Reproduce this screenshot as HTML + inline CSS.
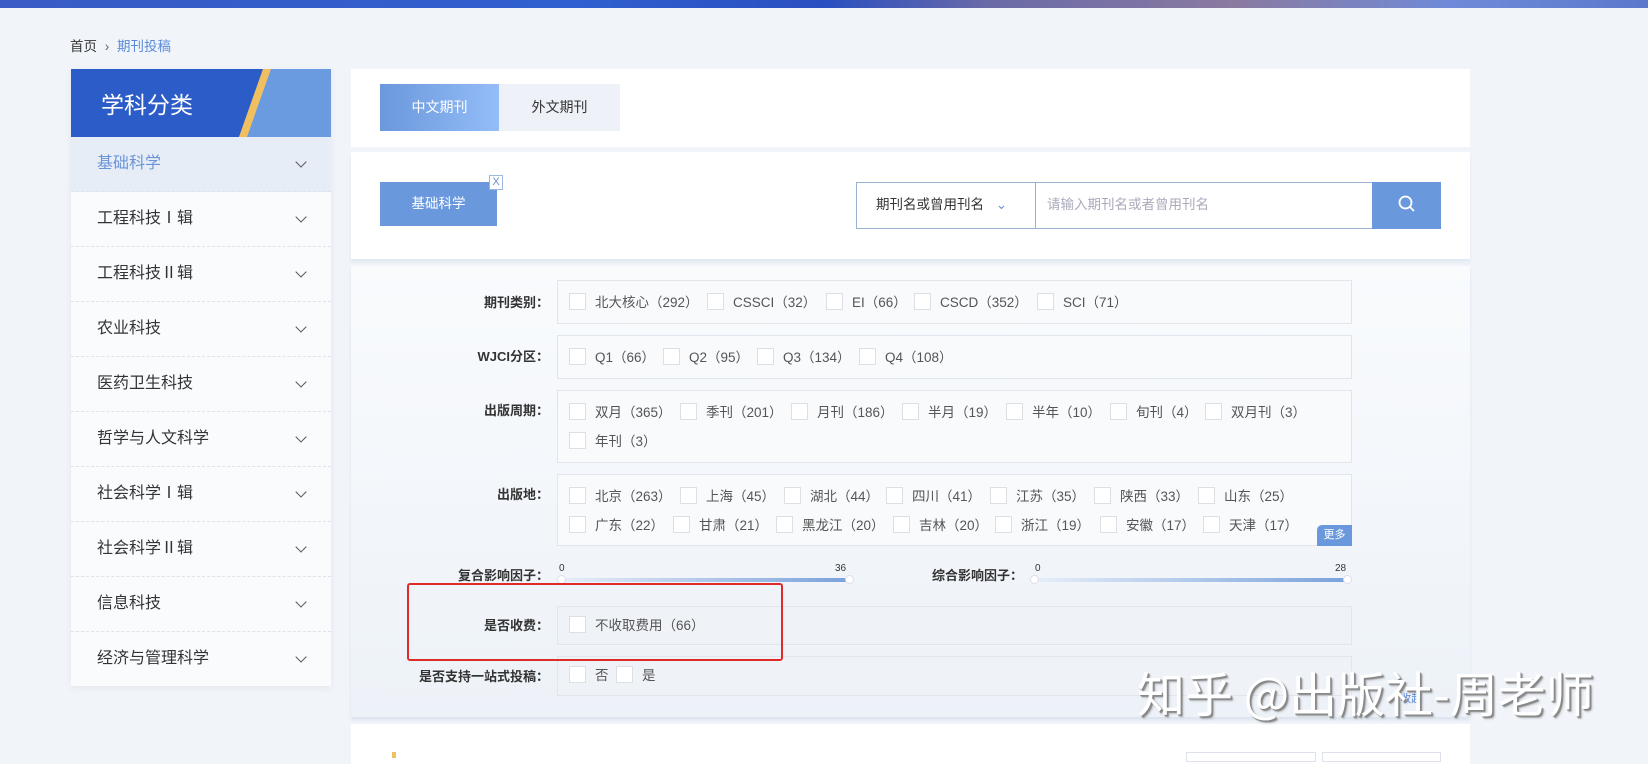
<!DOCTYPE html>
<html><head><meta charset="utf-8">
<style>
*{margin:0;padding:0;box-sizing:border-box}
body{width:1648px;height:758px;overflow:hidden;background:#f1f5fa;font-family:"Liberation Sans","Noto Sans CJK SC",sans-serif;position:relative;color:#333}
.a{position:absolute}
.top{left:0;top:0;width:1648px;height:8px;background:linear-gradient(90deg,#3a5bc4,#2f5fd0 35%,#2a4fc0 50%,#6a6aa8 60%,#8a7aa0 75%,#6f8ad8 88%,#5a78cc)}
.side{left:71px;top:69px;width:260px;height:617px;background:#f9fbfd;box-shadow:0 2px 8px rgba(0,0,0,.06)}
.hd{left:71px;top:69px;width:260px;height:68px;background:#6a9ae0;overflow:hidden}
.item{position:absolute;left:0;width:260px;height:55px;border-bottom:1px dashed #dde3ea;font-size:16px;line-height:53px;padding-left:26px;color:#333}
.item:after{content:"";position:absolute;right:26px;top:21px;width:7px;height:7px;border-right:1.5px solid #555;border-bottom:1.5px solid #555;transform:rotate(45deg)}
.card{background:#fff}
.lab{position:absolute;right:1099px;font-size:13px;font-weight:bold;color:#333;white-space:nowrap}
.box{position:absolute;left:557px;width:795px;border:1px solid #e2e6ec;background:#f8fafc}
.cb{position:absolute;font-size:13.5px;color:#555;white-space:nowrap;line-height:16px}
.cb:before{content:"";display:inline-block;width:15px;height:15px;border:1px solid #dcdfe4;background:#fff;vertical-align:-3px;margin-right:9px}
</style></head><body>
<div class="a top"></div>
<div class="a" style="left:70px;top:35px;font-size:13.5px;color:#333">首页 <span style="color:#666;margin:0 4px">›</span> <span style="color:#5b8ad6">期刊投稿</span></div>

<div class="a side">
<div class="item" style="top:68px;background:#e6edf7;color:#6a94d6">基础科学</div>
<div class="item" style="top:123px">工程科技Ⅰ辑</div>
<div class="item" style="top:178px">工程科技Ⅱ辑</div>
<div class="item" style="top:233px">农业科技</div>
<div class="item" style="top:288px">医药卫生科技</div>
<div class="item" style="top:343px">哲学与人文科学</div>
<div class="item" style="top:398px">社会科学Ⅰ辑</div>
<div class="item" style="top:453px">社会科学Ⅱ辑</div>
<div class="item" style="top:508px">信息科技</div>
<div class="item" style="top:563px;border:none">经济与管理科学</div>
</div>
<div class="a hd">
<svg width="260" height="68" style="position:absolute;left:0;top:0"><polygon points="0,0 192,0 168,68 0,68" fill="#2c5cc8"/><polygon points="192,0 200,0 176,68 168,68" fill="#f0c060"/></svg>
<div class="a" style="left:30px;top:17px;font-size:23px;color:#fff">学科分类</div>
</div>

<div class="a card" style="left:351px;top:69px;width:1119px;height:78px"></div>
<div class="a" style="left:380px;top:84px;width:119px;height:47px;background:linear-gradient(90deg,#6a98dc,#94bdf8);color:#fff;font-size:14px;line-height:47px;text-align:center">中文期刊</div>
<div class="a" style="left:499px;top:84px;width:121px;height:47px;background:#eef2f8;color:#333;font-size:14px;line-height:47px;text-align:center">外文期刊</div>

<div class="a card" style="left:351px;top:152px;width:1119px;height:107px;box-shadow:0 3px 3px #e2e8f0"></div>
<div class="a" style="left:380px;top:182px;width:117px;height:44px;background:#6a98dc;color:#fff;font-size:13.5px;line-height:44px;text-align:center">基础科学</div>
<div class="a" style="left:489px;top:175px;width:14px;height:15px;background:#fff;border:1px solid #9bb6e0;color:#6a8fcf;font-size:11px;line-height:13px;text-align:center">X</div>
<div class="a" style="left:856px;top:182px;width:585px;height:47px;border:1px solid #9bb3cf;background:#fff"></div>
<div class="a" style="left:876px;top:182px;line-height:45px;font-size:13.5px;color:#333">期刊名或曾用刊名 <span style="color:#6a94d6;margin-left:8px">⌄</span></div>
<div class="a" style="left:1035px;top:182px;width:1px;height:47px;background:#9bb3cf"></div>
<div class="a" style="left:1047px;top:182px;line-height:45px;font-size:13.5px;color:#aab">请输入期刊名或者曾用刊名</div>
<div class="a" style="left:1372px;top:182px;width:69px;height:47px;background:#6a98dc"></div>
<svg class="a" style="left:1397px;top:194px" width="20" height="20"><circle cx="8.5" cy="8.5" r="6" fill="none" stroke="#fff" stroke-width="1.8"/><line x1="13" y1="13" x2="17" y2="17" stroke="#fff" stroke-width="1.8"/></svg>

<div class="a" style="left:351px;top:266px;width:1119px;height:451px;background:linear-gradient(180deg,#f9fbfd,#edf2f8);box-shadow:0 3px 3px #dde4ee"></div>

<div class="box" style="top:280px;height:44px"></div>
<div class="lab" style="top:292px">期刊类别：</div>
<div class="cb" style="left:569px;top:293px">北大核心（292）</div>
<div class="cb" style="left:707px;top:293px">CSSCI（32）</div>
<div class="cb" style="left:826px;top:293px">EI（66）</div>
<div class="cb" style="left:914px;top:293px">CSCD（352）</div>
<div class="cb" style="left:1037px;top:293px">SCI（71）</div>

<div class="box" style="top:335px;height:44px"></div>
<div class="lab" style="top:346px">WJCI分区：</div>
<div class="cb" style="left:569px;top:348px">Q1（66）</div>
<div class="cb" style="left:663px;top:348px">Q2（95）</div>
<div class="cb" style="left:757px;top:348px">Q3（134）</div>
<div class="cb" style="left:859px;top:348px">Q4（108）</div>

<div class="box" style="top:390px;height:73px"></div>
<div class="lab" style="top:400px">出版周期：</div>
<div class="cb" style="left:569px;top:403px">双月（365）</div>
<div class="cb" style="left:680px;top:403px">季刊（201）</div>
<div class="cb" style="left:791px;top:403px">月刊（186）</div>
<div class="cb" style="left:902px;top:403px">半月（19）</div>
<div class="cb" style="left:1006px;top:403px">半年（10）</div>
<div class="cb" style="left:1110px;top:403px">旬刊（4）</div>
<div class="cb" style="left:1205px;top:403px">双月刊（3）</div>
<div class="cb" style="left:569px;top:432px">年刊（3）</div>

<div class="box" style="top:474px;height:72px"></div>
<div class="lab" style="top:484px">出版地：</div>
<div class="cb" style="left:569px;top:487px">北京（263）</div>
<div class="cb" style="left:680px;top:487px">上海（45）</div>
<div class="cb" style="left:784px;top:487px">湖北（44）</div>
<div class="cb" style="left:886px;top:487px">四川（41）</div>
<div class="cb" style="left:990px;top:487px">江苏（35）</div>
<div class="cb" style="left:1094px;top:487px">陕西（33）</div>
<div class="cb" style="left:1198px;top:487px">山东（25）</div>
<div class="cb" style="left:569px;top:516px">广东（22）</div>
<div class="cb" style="left:673px;top:516px">甘肃（21）</div>
<div class="cb" style="left:776px;top:516px">黑龙江（20）</div>
<div class="cb" style="left:893px;top:516px">吉林（20）</div>
<div class="cb" style="left:995px;top:516px">浙江（19）</div>
<div class="cb" style="left:1100px;top:516px">安徽（17）</div>
<div class="cb" style="left:1203px;top:516px">天津（17）</div>
<div class="a" style="left:1317px;top:525px;width:35px;height:21px;background:#6a98dc;color:#fff;font-size:11px;line-height:21px;text-align:center;border-radius:5px 0 0 0">更多</div>

<div class="lab" style="top:565px">复合影响因子：</div>
<div class="a" style="left:559px;top:563px;font-size:10px;color:#333">0</div>
<div class="a" style="left:835px;top:563px;font-size:10px;color:#333">36</div>
<div class="a" style="left:561px;top:578px;width:288px;height:4px;background:linear-gradient(90deg,#e6eef8,#7aa2dc)"></div>
<div class="a" style="left:557px;top:575px;width:9px;height:9px;border-radius:50%;background:#fff;border:1px solid #dde"></div>
<div class="a" style="left:845px;top:575px;width:9px;height:9px;border-radius:50%;background:#fff;border:1px solid #dde"></div>
<div class="a" style="right:625px;top:565px;font-size:13px;font-weight:bold">综合影响因子：</div>
<div class="a" style="left:1035px;top:563px;font-size:10px;color:#333">0</div>
<div class="a" style="left:1335px;top:563px;font-size:10px;color:#333">28</div>
<div class="a" style="left:1035px;top:578px;width:313px;height:4px;background:linear-gradient(90deg,#e6eef8,#7aa2dc)"></div>
<div class="a" style="left:1030px;top:575px;width:9px;height:9px;border-radius:50%;background:#fff;border:1px solid #dde"></div>
<div class="a" style="left:1343px;top:575px;width:9px;height:9px;border-radius:50%;background:#fff;border:1px solid #dde"></div>

<div class="box" style="top:606px;height:39px;background:#eff3f8"></div>
<div class="lab" style="top:615px">是否收费：</div>
<div class="cb" style="left:569px;top:616px">不收取费用（66）</div>

<div class="box" style="top:656px;height:40px;background:#eff3f8"></div>
<div class="lab" style="top:666px">是否支持一站式投稿：</div>
<div class="cb" style="left:569px;top:666px">否</div>
<div class="cb" style="left:616px;top:666px">是</div>
<div class="a" style="left:1392px;top:690px;font-size:11px;color:#5b8ad6">^ 收起</div>

<div class="a" style="left:407px;top:583px;width:376px;height:78px;border:2px solid #e02a2a;border-radius:3px"></div>

<div class="a card" style="left:351px;top:724px;width:1119px;height:40px"></div>
<div class="a" style="left:392px;top:752px;width:4px;height:6px;background:#f0c060"></div>
<div class="a" style="left:1186px;top:752px;width:130px;height:10px;border:1px solid #dde2ea"></div>
<div class="a" style="left:1322px;top:752px;width:119px;height:10px;border:1px solid #dde2ea"></div>

<div class="a" style="left:1137px;top:662px;font-size:48px;line-height:58px;color:#fff;text-shadow:2px 2px 1px #888,1px 1px 0 #999,3px 3px 2px rgba(0,0,0,.15);white-space:nowrap;font-family:'Noto Sans CJK SC',sans-serif">知乎 @出版社-周老师</div>
</body></html>
